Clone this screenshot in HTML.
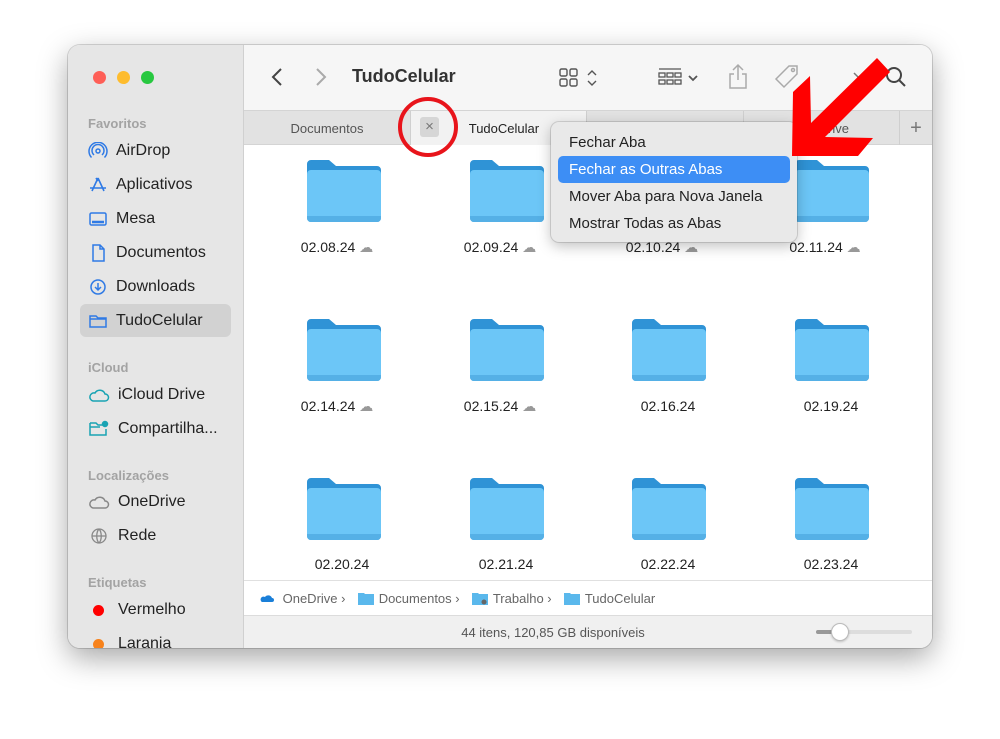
<!DOCTYPE html>
<html><head><meta charset="utf-8"><style>
*{margin:0;padding:0;box-sizing:border-box}
body{width:1000px;height:739px;background:#fff;font-family:"Liberation Sans",sans-serif;position:relative;overflow:hidden}
.win{position:absolute;left:68px;top:45px;width:864px;height:603px;border-radius:12px;overflow:hidden;background:#fff;box-shadow:0 10px 30px rgba(0,0,0,.35),0 0 0 1px rgba(0,0,0,.15)}
.side{position:absolute;left:0;top:0;width:176px;height:603px;background:#e6e6e6;border-right:1px solid #d0d0d0}
.dot{position:absolute;top:26px;width:13px;height:13px;border-radius:50%}
.sh{position:absolute;left:20px;font-size:13px;color:#a3a3a3;font-weight:bold}
.si{position:absolute;left:20px;font-size:16px;color:#222;height:20px;display:flex;align-items:center}
.si svg{margin-right:8px}
.sel{position:absolute;left:12px;top:259px;width:151px;height:33px;background:#d2d2d2;border-radius:6px}
.tb{position:absolute;left:176px;top:0;right:0;height:65px;background:#f6f6f6}
.tabs{position:absolute;left:176px;top:65px;right:0;height:35px;background:#e2e2e2;border-top:1px solid #d4d4d4;border-bottom:1px solid #d4d4d4}
.tab{position:absolute;top:0;height:34px;font-size:13px;color:#555;display:flex;align-items:center;justify-content:center;border-left:1px solid #cfcfcf}
.content{position:absolute;left:176px;top:100px;right:0;height:435px;background:#fff}
.lbl{position:absolute;width:140px;text-align:center;font-size:14px;color:#222}
.path{position:absolute;left:176px;top:535px;right:0;height:35px;background:#fff;border-top:1px solid #e0e0e0;font-size:13px;color:#666;display:flex;align-items:center;padding-left:16px;gap:5px}
.status{position:absolute;left:176px;top:570px;right:0;height:33px;background:#f0f0f0;border-top:1px solid #dcdcdc;font-size:13px;color:#555}
.menu{position:absolute;left:551px;top:122px;width:246px;height:120px;background:#e9e9e9;border-radius:8px;box-shadow:0 4px 14px rgba(0,0,0,.25),0 0 0 1px rgba(0,0,0,.12);font-size:15px;color:#222}
.mi{position:absolute;left:18px;height:27px;line-height:27px}
.hl{position:absolute;left:7px;top:34px;width:232px;height:27px;background:#3d8ef5;border-radius:5px}
</style></head><body>
<div class="win">
 <div class="side">
  <div class="dot" style="left:25px;background:#fe5f57"></div>
  <div class="dot" style="left:49px;background:#febc2e"></div>
  <div class="dot" style="left:73px;background:#28c840"></div>
  <div class="sh" style="top:71px">Favoritos</div>
  <div class="si" style="top:96px"><svg width="20" height="18" viewBox="0 0 20 18" fill="none" stroke="#2f7ae5" stroke-width="1.5"><circle cx="10" cy="9" r="2"/><path d="M6 13a6 6 0 1 1 8 0M3.5 15.5a9 9 0 1 1 13 0"/></svg>AirDrop</div>
  <div class="si" style="top:130px"><svg width="20" height="18" viewBox="0 0 20 18" fill="none" stroke="#2f7ae5" stroke-width="1.6"><path d="M10 2L4 15M10 2l6 13M2 12h16M8 2l2 3"/></svg>Aplicativos</div>
  <div class="si" style="top:164px"><svg width="20" height="18" viewBox="0 0 20 18" fill="none" stroke="#2f7ae5" stroke-width="1.5"><rect x="2" y="3" width="16" height="12" rx="1.5"/><path d="M4 12h12" stroke-width="2.5"/></svg>Mesa</div>
  <div class="si" style="top:198px"><svg width="20" height="18" viewBox="0 0 20 18" fill="none" stroke="#2f7ae5" stroke-width="1.5"><path d="M5 1h7l4 4v12H5z M12 1v4h4"/></svg>Documentos</div>
  <div class="si" style="top:232px"><svg width="20" height="18" viewBox="0 0 20 18" fill="none" stroke="#2f7ae5" stroke-width="1.5"><circle cx="10" cy="9" r="7"/><path d="M10 5v7M7 9l3 3 3-3"/></svg>Downloads</div>
  <div class="sel"></div>
  <div class="si" style="top:266px"><svg width="20" height="18" viewBox="0 0 20 18" fill="none" stroke="#2f7ae5" stroke-width="1.5"><path d="M2 4h6l2 2h8v9H2z M2 7h16"/></svg>TudoCelular</div>
  <div class="sh" style="top:315px">iCloud</div>
  <div class="si" style="top:340px"><svg width="22" height="18" viewBox="0 0 22 18" fill="none" stroke="#19a3b3" stroke-width="1.5"><path d="M5 15h12a3.5 3.5 0 0 0 0-7 5.5 5.5 0 0 0-10-1A4 4 0 0 0 5 15z"/></svg>iCloud Drive</div>
  <div class="si" style="top:374px"><svg width="22" height="18" viewBox="0 0 22 18" fill="none" stroke="#19a3b3" stroke-width="1.5"><path d="M2 3h6l2 2h5M2 3v12h16V9M2 7h10"/><circle cx="17" cy="4" r="2.5" fill="#19a3b3"/></svg>Compartilha...</div>
  <div class="sh" style="top:423px">Localizações</div>
  <div class="si" style="top:447px"><svg width="22" height="18" viewBox="0 0 22 18" fill="none" stroke="#888" stroke-width="1.5"><path d="M5 15h12a3.5 3.5 0 0 0 0-7 5.5 5.5 0 0 0-10-1A4 4 0 0 0 5 15z"/></svg>OneDrive</div>
  <div class="si" style="top:481px"><svg width="22" height="18" viewBox="0 0 22 18" fill="none" stroke="#888" stroke-width="1.3"><circle cx="11" cy="9" r="7"/><path d="M4 9h14M11 2c-3 3-3 11 0 14M11 2c3 3 3 11 0 14"/></svg>Rede</div>
  <div class="sh" style="top:530px">Etiquetas</div>
  <div class="si" style="top:555px"><span style="width:11px;height:11px;border-radius:50%;background:#f00;margin:0 14px 0 5px"></span>Vermelho</div>
  <div class="si" style="top:589px"><span style="width:11px;height:11px;border-radius:50%;background:#f7821b;margin:0 14px 0 5px"></span>Laranja</div>
 </div>
 <div class="tb">
  <svg style="position:absolute;left:26px;top:22px" width="14" height="20" viewBox="0 0 14 20" fill="none" stroke="#444" stroke-width="2"><path d="M11 2L3 10l8 8"/></svg>
  <svg style="position:absolute;left:70px;top:22px" width="14" height="20" viewBox="0 0 14 20" fill="none" stroke="#aaa" stroke-width="2"><path d="M3 2l8 8-8 8"/></svg>
  <div style="position:absolute;left:108px;top:21px;font-size:18px;font-weight:bold;color:#333">TudoCelular</div>
  <svg style="position:absolute;left:315px;top:22px" width="42" height="22" viewBox="0 0 42 22" fill="none" stroke="#555" stroke-width="1.4"><rect x="1" y="2" width="7" height="7" rx="1.5"/><rect x="11" y="2" width="7" height="7" rx="1.5"/><rect x="1" y="12" width="7" height="7" rx="1.5"/><rect x="11" y="12" width="7" height="7" rx="1.5"/><path d="M29 8l4-4 4 4M29 14l4 4 4-4"/></svg>
  <svg style="position:absolute;left:414px;top:22px" width="46" height="22" viewBox="0 0 46 22" fill="none" stroke="#555" stroke-width="1.3"><path d="M1 2h22"/><rect x="1" y="6" width="6" height="4"/><rect x="9" y="6" width="6" height="4"/><rect x="17" y="6" width="6" height="4"/><rect x="1" y="13" width="6" height="4"/><rect x="9" y="13" width="6" height="4"/><rect x="17" y="13" width="6" height="4"/><path d="M31 9l4 4 4-4" stroke-width="1.8"/></svg>
  <svg style="position:absolute;left:483px;top:18px" width="22" height="28" viewBox="0 0 22 28" fill="none" stroke="#aaa" stroke-width="1.5"><path d="M11 2v15M6 7l5-5 5 5M7 11H3v14h16V11h-4"/></svg>
  <svg style="position:absolute;left:529px;top:19px" width="28" height="26" viewBox="0 0 28 26" fill="none" stroke="#aaa" stroke-width="1.5"><path d="M16 2h8v8L11 23 3 15z"/><circle cx="20" cy="6" r="1.5"/></svg>
  <svg style="position:absolute;left:608px;top:26px" width="14" height="14" viewBox="0 0 14 14" fill="none" stroke="#777" stroke-width="1.5"><path d="M2 2l10 10M12 2L2 12"/></svg>
  <svg style="position:absolute;left:640px;top:20px" width="24" height="24" viewBox="0 0 24 24" fill="none" stroke="#444" stroke-width="2"><circle cx="10" cy="10" r="7"/><path d="M15 15l6 6"/></svg>
 </div>
 <div class="tabs">
  <div class="tab" style="left:0;width:166px;border-left:none">Documentos</div>
  <div class="tab" style="left:166px;width:176px;background:#f2f2f2;color:#222">&nbsp;&nbsp;&nbsp;TudoCelular</div>
  <div style="position:absolute;left:176px;top:6px;width:19px;height:20px;background:#d6d6d6;border-radius:3px;text-align:center;font-size:15px;line-height:20px;color:#777">×</div>
  <div class="tab" style="left:342px;width:157px"></div>
  <div class="tab" style="left:499px;width:156px">OneDrive</div>
  <div class="tab" style="left:655px;width:33px;font-size:20px;color:#777">+</div>
 </div>
 <div class="content"></div>
 <div class="path">
  <svg width="14" height="10" viewBox="0 0 14 10"><path d="M2 9h10a2 2 0 0 0 0-4 4 4 0 0 0-7-1 2.5 2.5 0 0 0-3 5z" fill="#1a7fd8"/></svg>&nbsp;OneDrive ›
  &nbsp;<svg width="16" height="13" viewBox="0 0 16 13"><path d="M0 1h6l1 1h9v11H0z" fill="#5ab8ec"/></svg>Documentos ›
  &nbsp;<svg width="16" height="13" viewBox="0 0 16 13"><path d="M0 1h6l1 1h9v11H0z" fill="#5ab8ec"/><circle cx="12" cy="10" r="2.5" fill="#666"/></svg>Trabalho ›
  &nbsp;<svg width="16" height="13" viewBox="0 0 16 13"><path d="M0 1h6l1 1h9v11H0z" fill="#5ab8ec"/></svg>TudoCelular
 </div>
 <div class="status">
  <div style="position:absolute;left:0;right:0;top:9px;text-align:center;padding-right:70px">44 itens, 120,85 GB disponíveis</div>
  <div style="position:absolute;left:572px;top:14px;width:96px;height:4px;border-radius:2px;background:#ddd"></div>
  <div style="position:absolute;left:572px;top:14px;width:22px;height:4px;border-radius:2px;background:#999"></div>
  <div style="position:absolute;left:587px;top:7px;width:18px;height:18px;border-radius:50%;background:#fff;border:1px solid #bbb;box-shadow:0 1px 2px rgba(0,0,0,.2)"></div>
 </div>
</div>
<svg width="1000" height="739" style="position:absolute;left:0;top:0">
 <defs><g id="fd"><path d="M0 4a4 4 0 0 1 4-4h18l7 6h41a4 4 0 0 1 4 4v48a4 4 0 0 1-4 4H4a4 4 0 0 1-4-4z" fill="#2f93d6"/><path d="M0 14a4 4 0 0 1 4-4h66a4 4 0 0 1 4 4v44a4 4 0 0 1-4 4H4a4 4 0 0 1-4-4z" fill="#6cc6f7"/><path d="M0 56h74v2a4 4 0 0 1-4 4H4a4 4 0 0 1-4-4z" fill="#55b0e6"/></g></defs>
 <use href="#fd" x="307" y="160"/><use href="#fd" x="470" y="160"/><use href="#fd" x="795" y="160"/>
 <use href="#fd" x="307" y="319"/><use href="#fd" x="470" y="319"/><use href="#fd" x="632" y="319"/><use href="#fd" x="795" y="319"/>
 <use href="#fd" x="307" y="478"/><use href="#fd" x="470" y="478"/><use href="#fd" x="632" y="478"/><use href="#fd" x="795" y="478"/>
</svg>
<div class="lbl" style="left:267px;top:239px">02.08.24 <span style="color:#999">☁</span></div>
<div class="lbl" style="left:430px;top:239px">02.09.24 <span style="color:#999">☁</span></div>
<div class="lbl" style="left:592px;top:239px">02.10.24 <span style="color:#999">☁</span></div>
<div class="lbl" style="left:755px;top:239px">02.11.24 <span style="color:#999">☁</span></div>
<div class="lbl" style="left:267px;top:398px">02.14.24 <span style="color:#999">☁</span></div>
<div class="lbl" style="left:430px;top:398px">02.15.24 <span style="color:#999">☁</span></div>
<div class="lbl" style="left:598px;top:398px">02.16.24</div>
<div class="lbl" style="left:761px;top:398px">02.19.24</div>
<div class="lbl" style="left:272px;top:556px">02.20.24</div>
<div class="lbl" style="left:436px;top:556px">02.21.24</div>
<div class="lbl" style="left:598px;top:556px">02.22.24</div>
<div class="lbl" style="left:761px;top:556px">02.23.24</div>
<div class="menu">
 <div class="hl"></div>
 <div class="mi" style="top:7px">Fechar Aba</div>
 <div class="mi" style="top:34px;color:#fff">Fechar as Outras Abas</div>
 <div class="mi" style="top:61px">Mover Aba para Nova Janela</div>
 <div class="mi" style="top:88px">Mostrar Todas as Abas</div>
</div>
<svg width="1000" height="739" style="position:absolute;left:0;top:0">
 <circle cx="428" cy="127" r="28" fill="none" stroke="#e8141b" stroke-width="4"/>
 <polygon points="792,156 793,92 810,76 811,123 877,58 890,72 825,137 873,138 858,156" fill="#f00"/>
</svg>
</body></html>
